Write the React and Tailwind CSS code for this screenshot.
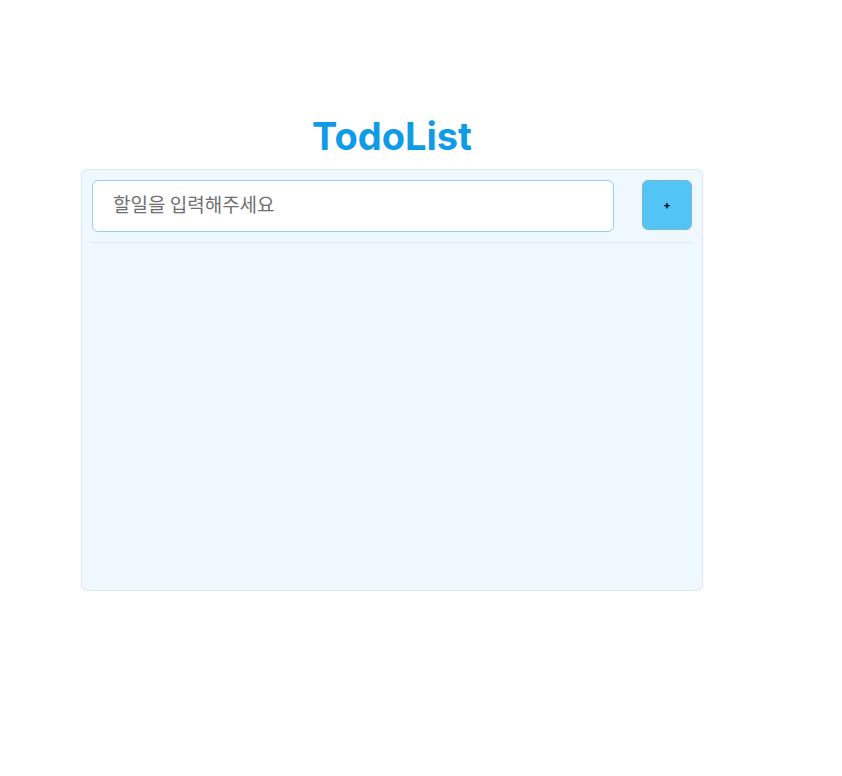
export default function App() {
  return (
    <div className="min-h-screen bg-white pt-[116px]" style={{ fontFamily: 'Inter, "Noto Sans CJK KR", sans-serif' }}>
      <div className="ml-[81px] w-[622px]">
        <h1 className="mb-[12px] text-center text-[38px] leading-[41px] font-bold text-[#0f9be6]">TodoList</h1>

        <div className="h-[422px] rounded-md border border-[#dde6ef] bg-[#eff7ff] p-[10px]">
          <div className="flex items-start justify-between">
            <input
              type="text"
              placeholder="할일을 입력해주세요"
              className="h-[52px] w-[522px] rounded-md border border-[#8fd0f0] bg-white px-5 pb-[5px] text-[19px] text-gray-700 outline-none placeholder:text-[#707070]"
              style={{ fontFamily: '"Noto Sans CJK KR", sans-serif' }}
            />
            <button className="flex h-[50px] w-[50px] items-center justify-center rounded-md border border-[#7fb6d6] bg-[#52c4f6] text-[11px] font-bold text-black">
              +
            </button>
          </div>
          <div className="mt-[10px] border-t border-[#dfe7ee]" />
        </div>
      </div>
    </div>
  );
}
